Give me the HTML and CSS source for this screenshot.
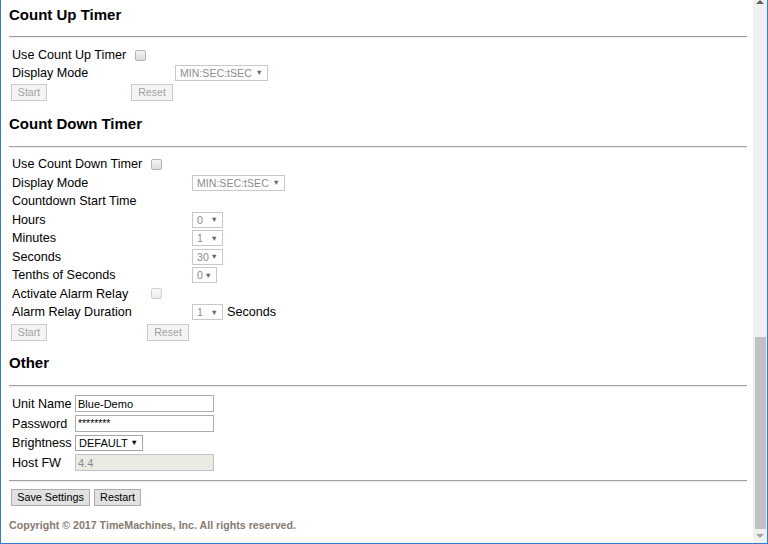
FILE: index.html
```html
<!DOCTYPE html>
<html>
<head>
<meta charset="utf-8">
<title>Settings</title>
<link rel="stylesheet" href="styles.css">
</head>
<body>
<div class="window">
  <main class="page">
    <section class="sec first">
      <h2 class="title">Count Up Timer</h2>
      <hr class="rule">
      <div class="form form-up">
        <span class="lbl">Use Count Up Timer</span>
        <span class="c2"><input type="checkbox" class="chk"></span>
        <span class="c3"></span>

        <span class="lbl">Display Mode</span>
        <span class="c2"></span>
        <span class="c3"><span class="sel dis w92"><span>MIN:SEC:tSEC</span><span class="caret">▼</span></span></span>

        <span class="c1"><button class="btn dis w36" disabled>Start</button></span>
        <span class="c2"><button class="btn dis w42" disabled>Reset</button></span>
        <span class="c3"></span>
      </div>
    </section>

    <section class="sec">
      <h2 class="title">Count Down Timer</h2>
      <hr class="rule">
      <div class="form form-down">
        <span class="lbl">Use Count Down Timer</span>
        <span class="c2"><input type="checkbox" class="chk"></span>
        <span class="c3"></span>

        <span class="lbl">Display Mode</span>
        <span class="c2"></span>
        <span class="c3"><span class="sel dis w92"><span>MIN:SEC:tSEC</span><span class="caret">▼</span></span></span>

        <span class="lbl">Countdown Start Time</span>
        <span class="c2"></span>
        <span class="c3"></span>

        <span class="lbl">Hours</span>
        <span class="c2"></span>
        <span class="c3"><span class="sel dis w31"><span>0</span><span class="caret">▼</span></span></span>

        <span class="lbl">Minutes</span>
        <span class="c2"></span>
        <span class="c3"><span class="sel dis w31"><span>1</span><span class="caret">▼</span></span></span>

        <span class="lbl">Seconds</span>
        <span class="c2"></span>
        <span class="c3"><span class="sel dis w31"><span>30</span><span class="caret">▼</span></span></span>

        <span class="lbl">Tenths of Seconds</span>
        <span class="c2"></span>
        <span class="c3"><span class="sel dis w25"><span>0</span><span class="caret">▼</span></span></span>

        <span class="lbl">Activate Alarm Relay</span>
        <span class="c2"><input type="checkbox" class="chk" disabled></span>
        <span class="c3"></span>

        <span class="lbl">Alarm Relay Duration</span>
        <span class="c2"></span>
        <span class="c3"><span class="sel dis w31"><span>1</span><span class="caret">▼</span></span><span class="unit">Seconds</span></span>

        <span class="c1"><button class="btn dis w36" disabled>Start</button></span>
        <span class="c2"><button class="btn dis w42" disabled>Reset</button></span>
        <span class="c3"></span>
      </div>
    </section>

    <section class="sec last">
      <h2 class="title">Other</h2>
      <hr class="rule">
      <div class="form form-other">
        <span class="lbl">Unit Name</span>
        <span class="c2"><input type="text" class="txt" value="Blue-Demo"></span>

        <span class="lbl">Password</span>
        <span class="c2"><input type="text" class="txt pw" value="********"></span>

        <span class="lbl">Brightness</span>
        <span class="c2"><span class="sel on w68"><span>DEFAULT</span><span class="caret">▼</span></span></span>

        <span class="lbl">Host FW</span>
        <span class="c2"><input type="text" class="txt ro" value="4.4" disabled></span>
      </div>
      <hr class="rule rule-end">
      <div class="actions">
        <button class="btn on w79">Save Settings</button>
        <button class="btn on w47">Restart</button>
      </div>
      <p class="copy">Copyright © 2017 TimeMachines, Inc. All rights reserved.</p>
    </section>
  </main>

  <div class="scrollbar">
    <div class="sb-up"><span class="tri-up"></span></div>
    <div class="sb-track">
      <div class="sb-space"></div>
      <div class="sb-thumb"></div>
    </div>
    <div class="sb-down"><span class="tri-down"></span></div>
  </div>
</div>
</body>
</html>
```

FILE: styles.css
```css
html, body {
  margin: 0;
  padding: 0;
  background: #fff;
}

body {
  font-family: "Liberation Sans", Arial, sans-serif;
  font-size: 12.6px;
  color: #000;
}

.window {
  display: flex;
  width: 768px;
  height: 544px;
  box-sizing: border-box;
  border-left: 1px solid #2f80d2;
  border-right: 1px solid #2f80d2;
  border-bottom: 1px solid #2f80d2;
  overflow: hidden;
}

.page {
  flex: 1;
  min-width: 0;
  padding: 4.5px 6px 0 8px;
}

.sec {
  margin-top: 11px;
}

.sec.first {
  margin-top: 0;
}

.sec.last {
  margin-top: 10.5px;
}

.title {
  margin: 0;
  font-size: 15px;
  line-height: 20px;
  font-weight: bold;
  color: #000;
}

.rule {
  height: 0;
  margin: 11.5px 0 0;
  border: 0;
  border-top: 1px solid #a0a0a0;
  border-bottom: 1px solid #eeeeee;
}

.rule-end {
  margin: 7px 0 7px;
}

.form {
  display: grid;
  margin-left: 2px;
  align-items: center;
}

.form-up {
  padding-top: 8px;
  grid-template-columns: 120px 44px 1fr;
  grid-template-rows: 18px 18px 21px;
}

.form-down {
  padding-top: 7.5px;
  grid-template-columns: 136px 45px 1fr;
  grid-template-rows: repeat(9, 18.5px) 21px;
}

.form-other {
  padding-top: 7.5px;
  grid-template-columns: 64px 1fr;
  grid-template-rows: repeat(4, 19.7px);
}

.lbl {
  padding-left: 1px;
  white-space: nowrap;
}

.c1, .c2, .c3 {
  display: flex;
  align-items: center;
}

.chk {
  appearance: none;
  -webkit-appearance: none;
  width: 11px;
  height: 11px;
  margin: 0 0 0 4px;
  box-sizing: border-box;
  border: 1px solid #b3b3b3;
  border-radius: 2px;
  background: linear-gradient(#f6f6f6, #dcdcdc);
}

.chk:disabled {
  border-color: #cfcfcf;
  background: linear-gradient(#fafafa, #ebebeb);
}

.sel {
  display: inline-flex;
  align-items: center;
  justify-content: space-between;
  height: 16px;
  box-sizing: border-box;
  padding: 0 4px 0 4px;
  border: 1px solid #c8c8c8;
  background: #fff;
  font-size: 10.6px;
  white-space: nowrap;
}

.sel.dis {
  color: #8c8c8c;
}

.sel.dis .caret {
  color: #6a6a6a;
}

.sel.on {
  border-color: #a3a3a3;
  color: #000;
  font-size: 11px;
  padding-left: 3px;
}

.sel.on .caret {
  color: #000;
}

.caret {
  font-size: 7.5px;
  line-height: 1;
}

.w92 { width: 93px; }
.w31 { width: 31px; }
.w25 { width: 25px; }
.w68 { width: 68px; }

.unit {
  margin-left: 4px;
}

.btn {
  height: 17px;
  box-sizing: border-box;
  padding: 0;
  margin: 0;
  font-family: "Liberation Sans", Arial, sans-serif;
  font-size: 10.6px;
  line-height: 15px;
  text-align: center;
}

.btn.dis {
  border: 1px solid #cacaca;
  background: #f4f4f4;
  color: #a2a2a2;
}

.btn.on {
  border: 1px solid #adadad;
  background: #e1e1e1;
  color: #000;
  font-size: 10.8px;
}

.w36 { width: 36px; }
.w42 { width: 42px; }
.w79 { width: 79px; }
.w47 { width: 47px; }

.actions {
  display: flex;
  gap: 4px;
  margin-left: 2px;
}

.txt {
  width: 139px;
  height: 17px;
  box-sizing: border-box;
  margin: 0;
  padding: 0 2px;
  border: 1px solid #adadad;
  background: #fff;
  font-family: "Liberation Sans", Arial, sans-serif;
  font-size: 11px;
  color: #000;
  outline: none;
}

.txt.pw {
  font-size: 10.4px;
}

.txt.ro {
  background: #ebebe4;
  border-color: #c2c2c2;
  color: #8c8c8c;
}

.copy {
  margin: 12px 0 0;
  font-size: 10.65px;
  line-height: 14px;
  font-weight: bold;
  color: #877a6e;
}

.scrollbar {
  width: 14px;
  display: flex;
  flex-direction: column;
  background: #f0f0f0;
}

.sb-up {
  height: 5px;
  display: flex;
  justify-content: center;
  align-items: flex-start;
}

.tri-up {
  width: 0;
  height: 0;
  border-left: 4px solid transparent;
  border-right: 4px solid transparent;
  border-bottom: 4px solid #606060;
}

.sb-track {
  flex: 1;
  display: flex;
  flex-direction: column;
  padding: 0 1px 0 2px;
}

.sb-space {
  flex: 1;
}

.sb-thumb {
  height: 192px;
  margin-bottom: 2px;
  background: #c1c1c1;
}

.sb-down {
  height: 12px;
  display: flex;
  justify-content: center;
  padding-top: 3px;
  box-sizing: border-box;
}

.tri-down {
  width: 0;
  height: 0;
  border-left: 4px solid transparent;
  border-right: 4px solid transparent;
  border-top: 4px solid #a3a3a3;
}
```
